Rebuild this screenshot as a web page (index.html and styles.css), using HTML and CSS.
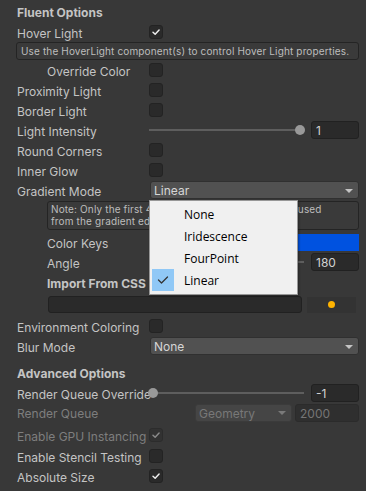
FILE: index.html
```html
<!DOCTYPE html>
<html>
<head>
<meta charset="utf-8">
<link rel="stylesheet" href="styles.css">
</head>
<body>
<div class="inspector">
  <div class="row header">Fluent Options</div>
  <div class="row">
    <span class="label">Hover Light</span>
    <span class="checkbox"><svg viewBox="0 0 14 14"><path d="M3.5 7.2 L6 9.6 L10.6 4.6" /></svg></span>
  </div>
  <div class="helpbox">Use the HoverLight component(s) to control Hover Light properties.</div>
  <div class="row">
    <span class="label indent">Override Color</span>
    <span class="checkbox"></span>
  </div>
  <div class="row">
    <span class="label">Proximity Light</span>
    <span class="checkbox"></span>
  </div>
  <div class="row">
    <span class="label">Border Light</span>
    <span class="checkbox"></span>
  </div>
  <div class="row">
    <span class="label">Light Intensity</span>
    <div class="slider"><div class="track"></div><div class="thumb thumb-max"></div></div>
    <div class="numfield">1</div>
  </div>
  <div class="row">
    <span class="label">Round Corners</span>
    <span class="checkbox"></span>
  </div>
  <div class="row">
    <span class="label">Inner Glow</span>
    <span class="checkbox"></span>
  </div>
  <div class="row">
    <span class="label">Gradient Mode</span>
    <div class="dropdown"><span>Linear</span><span class="arrow"></span></div>
  </div>
  <div class="notebox">Note: Only the first 4<span class="spread"> color and alpha keys</span> will be used<br>from the gradient editor.</div>
  <div class="row">
    <span class="label indent">Color Keys</span>
    <div class="gradient"></div>
  </div>
  <div class="row">
    <span class="label indent">Angle</span>
    <div class="slider"><div class="track"></div><div class="thumb thumb-mid"></div></div>
    <div class="numfield">180</div>
  </div>
  <div class="row">
    <span class="label indent bold">Import From CSS</span>
  </div>
  <div class="css-row">
    <div class="textinput"></div>
    <div class="status"><span class="dot"></span></div>
  </div>
  <div class="row">
    <span class="label">Environment Coloring</span>
    <span class="checkbox"></span>
  </div>
  <div class="row">
    <span class="label">Blur Mode</span>
    <div class="dropdown"><span>None</span><span class="arrow"></span></div>
  </div>
  <div class="row header adv">Advanced Options</div>
  <div class="row">
    <span class="label nowrap">Render Queue Override</span>
    <div class="slider rq"><div class="track"></div><div class="thumb thumb-min"></div></div>
    <div class="numfield">-1</div>
  </div>
  <div class="row rq-row">
    <span class="label disabled">Render Queue</span>
    <div class="rq-fields">
      <div class="dropdown small disabled"><span>Geometry</span><span class="arrow"></span></div>
      <div class="numfield wide disabled">2000</div>
    </div>
  </div>
  <div class="row gpu">
    <span class="label disabled">Enable GPU Instancing</span>
    <span class="checkbox disabled"><svg viewBox="0 0 14 14"><path d="M3.5 7.2 L6 9.6 L10.6 4.6" /></svg></span>
  </div>
  <div class="row">
    <span class="label">Enable Stencil Testing</span>
    <span class="checkbox"></span>
  </div>
  <div class="row">
    <span class="label">Absolute Size</span>
    <span class="checkbox"><svg viewBox="0 0 14 14"><path d="M3.5 7.2 L6 9.6 L10.6 4.6" /></svg></span>
  </div>
</div>

<div class="popup">
  <div class="item"><span class="mark"></span><span>None</span></div>
  <div class="item"><span class="mark"></span><span>Iridescence</span></div>
  <div class="item"><span class="mark"></span><span>FourPoint</span></div>
  <div class="item"><span class="mark on"><svg viewBox="0 0 22 22"><path d="M6.5 11 L9.5 14 L15.5 8" /></svg></span><span>Linear</span></div>
</div>
</body>
</html>
```

FILE: styles.css
```css
html, body {
  margin: 0;
  padding: 0;
}
body {
  background: #383838;
  width: 366px;
  height: 491px;
  overflow: hidden;
  position: relative;
  font-family: Inter, "Noto Sans", sans-serif;
  font-size: 12px;
  color: #c4c4c4;
}
.inspector {
  padding: 2px 7px 0 16px;
}
.row {
  display: flex;
  align-items: center;
  height: 20px;
}
.header {
  font-weight: bold;
  padding-left: 1px;
}
.adv {
  margin-top: 7px;
  height: 20px;
  padding-top: 1px;
  box-sizing: border-box;
}
.label {
  width: 132px;
  padding-left: 1px;
  padding-top: 2px;
  flex: none;
  white-space: nowrap;
}
.label.indent {
  padding-left: 31px;
  width: 102px;
}
.label.bold {
  font-weight: bold;
}
.label.disabled {
  color: #7e7e7e;
}
.checkbox {
  width: 12px;
  height: 12px;
  border: 1px solid #232323;
  border-radius: 3px;
  background: #2a2a2a;
  flex: none;
  display: flex;
}
.checkbox svg {
  width: 12px;
  height: 12px;
}
.checkbox svg path, .mark svg path {
  fill: none;
  stroke: #eeeeee;
  stroke-width: 1.7;
  stroke-linecap: round;
  stroke-linejoin: round;
}
.checkbox.disabled {
  background: #323232;
  border-color: #2c2c2c;
}
.checkbox.disabled svg path {
  stroke: #8a8a8a;
}
.helpbox {
  height: 16px;
  border: 1px solid #242424;
  border-radius: 3px;
  background: #3a3a3a;
  font-size: 10px;
  letter-spacing: 0.14px;
  line-height: 16px;
  padding-left: 4px;
  color: #bdbdbd;
  white-space: nowrap;
  overflow: hidden;
}
.notebox {
  margin: 1px 0 2px 31px;
  border: 1px solid #242424;
  border-radius: 3px;
  background: #3a3a3a;
  font-size: 10px;
  letter-spacing: 0.14px;
  line-height: 11.5px;
  padding: 2px 0 0 3px;
  box-sizing: border-box;
  height: 29px;
  color: #bdbdbd;
  white-space: nowrap;
  overflow: hidden;
}
.spread {
  word-spacing: 1.3px;
}
.slider {
  position: relative;
  width: 156px;
  height: 20px;
  flex: none;
}
.slider .track {
  position: absolute;
  left: 0;
  right: 1px;
  top: 9px;
  height: 2px;
  background: #5e5e5e;
}
.slider .thumb {
  position: absolute;
  top: 5px;
  width: 10px;
  height: 10px;
  border-radius: 50%;
  background: #999999;
}
.thumb-max { left: 146px; }
.thumb-mid { left: 73px; }
.thumb-min { left: -1px; }
.numfield {
  margin-left: 6px;
  height: 16px;
  border: 1px solid #212121;
  border-radius: 3px;
  background: #2a2a2a;
  color: #d2d2d2;
  line-height: 17px;
  padding-left: 4px;
  box-sizing: content-box;
  width: 42px;
  flex: none;
}
.numfield.disabled {
  background: #2f2f2f;
  border-color: #2b2b2b;
  color: #757575;
}
.dropdown {
  margin-left: 1px;
  flex: 1;
  height: 16px;
  border: 1px solid #303030;
  border-radius: 3px;
  background: #515151;
  color: #d6d6d6;
  display: flex;
  align-items: center;
  justify-content: space-between;
  padding: 0 5px 0 3px;
  font-size: 12px;
}
.dropdown > span:first-child {
  padding-top: 1px;
}
.arrow {
  width: 0;
  height: 0;
  border-left: 4px solid transparent;
  border-right: 4px solid transparent;
  border-top: 4px solid #c4c4c4;
  margin-top: 1px;
}
.dropdown.disabled {
  background: #454545;
  border-color: #3b3b3b;
  color: #787878;
}
.dropdown.disabled .arrow {
  border-top-color: #7a7a7a;
}
.rq-fields {
  margin-left: auto;
  display: flex;
  align-items: center;
}
.dropdown.small {
  flex: none;
  width: 87px;
}
.numfield.wide {
  margin-left: 3px;
  width: 58px;
}
.rq-row {
  height: 19px;
}
.gpu {
  margin-top: 2px;
  height: 22px;
}
.gradient {
  margin-left: 1px;
  flex: 1;
  height: 17px;
  background: #0052e0;
}
.css-row {
  display: flex;
  align-items: center;
  margin: 4px 0 3px 32px;
  height: 17px;
}
.textinput {
  width: 252px;
  height: 15px;
  border: 1px solid #212121;
  border-radius: 3px;
  background: #2a2a2a;
}
.status {
  margin-left: 5px;
  width: 49px;
  height: 16px;
  background: #333333;
  display: flex;
  align-items: center;
  justify-content: center;
}
.dot {
  width: 7px;
  height: 7px;
  border-radius: 50%;
  background: #ffb300;
}
.popup {
  position: absolute;
  left: 149px;
  top: 200px;
  width: 147px;
  height: 91px;
  padding-top: 2px;
  box-sizing: content-box;
  background: #f0f0f0;
  border: 1px solid #979797;
  box-shadow: 1px 1px 2px rgba(0,0,0,0.35);
  font-family: "Open Sans", "Noto Sans", sans-serif;
  font-size: 12px;
  color: #000;
}
.popup .item {
  display: flex;
  align-items: center;
  height: 22px;
}
.mark {
  width: 22px;
  height: 22px;
  margin-left: 2px;
  margin-right: 10px;
  flex: none;
}
.mark.on {
  background: #90c8f6;
}
.mark svg {
  width: 22px;
  height: 22px;
}
.mark svg path {
  stroke: #333;
  stroke-width: 1.3;
}
```
